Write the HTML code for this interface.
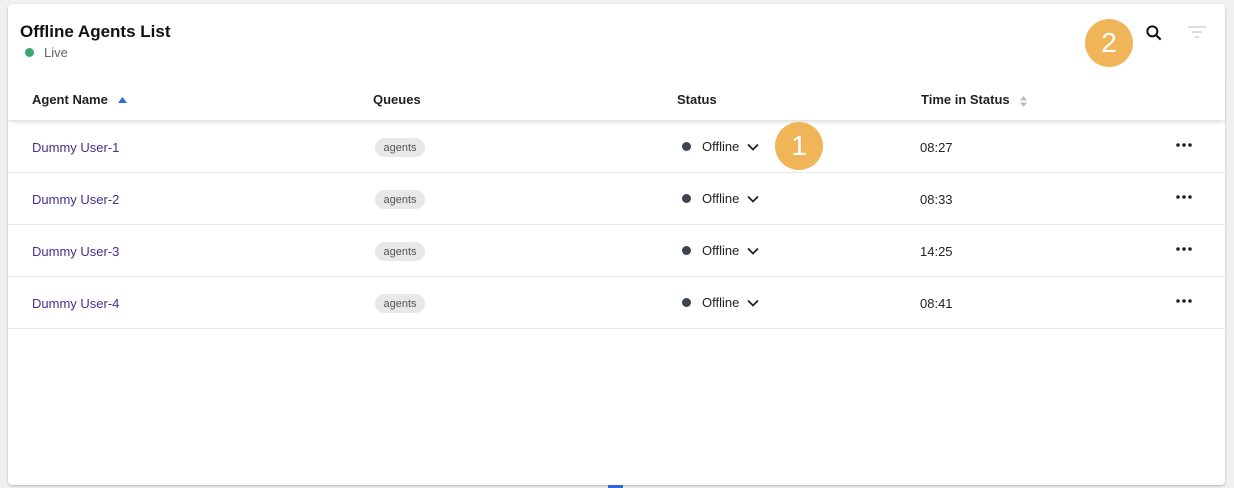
<!DOCTYPE html>
<html><head><meta charset="utf-8"><style>
*{margin:0;padding:0;box-sizing:border-box}
body{width:1234px;height:488px;background:#eef0f2;font-family:"Liberation Sans",sans-serif;position:relative;overflow:hidden}
.card{position:absolute;left:8px;top:4px;width:1217px;height:481px;background:#fff;border-radius:4px;box-shadow:0 1px 2px rgba(0,0,0,.25)}
.title{position:absolute;left:12px;top:18px;font-size:17px;font-weight:bold;color:#111}
.live{position:absolute;left:17px;top:41px;font-size:13px;color:#666}
.live i{display:inline-block;width:9px;height:9px;border-radius:50%;background:#3aa76d;margin-right:10px;vertical-align:0}
.hdr{position:absolute;left:0;top:78px;width:1217px;height:39px;box-shadow:0 3px 4px -2px rgba(0,0,0,.15);border-bottom:1px solid #e6e6e6}
.h{position:absolute;top:10px;font-size:13px;font-weight:bold;color:#222}
.row{position:absolute;left:0;width:1217px;height:52px;border-bottom:1px solid #e8e8e8}
.name{position:absolute;left:24px;top:19px;font-size:13px;color:#4b2d8f}
.chip{position:absolute;left:367px;top:17px;height:19px;width:50px;border-radius:10px;background:#e8e8e8;font-size:11px;color:#555;display:flex;align-items:center;justify-content:center}
.st{position:absolute;left:674px;top:18px;font-size:13px;color:#222;display:flex;align-items:center}
.st i{display:inline-block;width:9px;height:9px;border-radius:50%;background:#3d4350;margin-right:11px}
.t{position:absolute;left:912px;top:19px;font-size:13px;color:#222}
.dots{position:absolute;left:1168px;top:22px}
.badge{position:absolute;width:48px;height:48px;border-radius:50%;background:#f0b459;color:#fff;font-size:28px;text-align:center;line-height:48px;font-weight:300}
</style></head><body>
<div class="card">
<div class="title">Offline Agents List</div>
<div class="live"><i></i>Live</div>
<svg style="position:absolute;left:1136px;top:19px" width="20" height="20" viewBox="0 0 24 24"><circle cx="10" cy="10" r="6" fill="none" stroke="#111" stroke-width="2.4"/><path d="M14.5 14.5L20 20" stroke="#111" stroke-width="2.6"/></svg>
<svg style="position:absolute;left:1179px;top:21px" width="20" height="16" viewBox="0 0 20 16"><path d="M1 2h18M5 7h10M8 12h4" stroke="#d4d4d4" stroke-width="1.6"/></svg>
<div class="hdr">
<div class="h" style="left:24px">Agent Name</div>
<svg style="position:absolute;left:110px;top:15px" width="9" height="6" viewBox="0 0 9 6"><path d="M0 6L4.5 0L9 6Z" fill="#2d6ce0"/></svg>
<div class="h" style="left:365px">Queues</div>
<div class="h" style="left:669px">Status</div>
<div class="h" style="left:913px">Time in Status</div>
<svg style="position:absolute;left:1012px;top:14px" width="7" height="11" viewBox="0 0 7 11"><path d="M0 4.5L3.5 0L7 4.5ZM0 6.5L3.5 11L7 6.5Z" fill="#bbb"/></svg>
</div>
<div class="row" style="top:117px"><div class="name">Dummy User-1</div><div class="chip">agents</div><div class="st"><i></i>Offline<svg style="margin-left:8px" width="12" height="8" viewBox="0 0 12 8"><path d="M1 1.5L6 6.5L11 1.5" fill="none" stroke="#222" stroke-width="1.8"/></svg></div><div class="t">08:27</div><svg class="dots" width="16" height="4"><circle cx="2" cy="2" r="1.8" fill="#222"/><circle cx="8" cy="2" r="1.8" fill="#222"/><circle cx="14" cy="2" r="1.8" fill="#222"/></svg></div>
<div class="row" style="top:169px"><div class="name">Dummy User-2</div><div class="chip">agents</div><div class="st"><i></i>Offline<svg style="margin-left:8px" width="12" height="8" viewBox="0 0 12 8"><path d="M1 1.5L6 6.5L11 1.5" fill="none" stroke="#222" stroke-width="1.8"/></svg></div><div class="t">08:33</div><svg class="dots" width="16" height="4"><circle cx="2" cy="2" r="1.8" fill="#222"/><circle cx="8" cy="2" r="1.8" fill="#222"/><circle cx="14" cy="2" r="1.8" fill="#222"/></svg></div>
<div class="row" style="top:221px"><div class="name">Dummy User-3</div><div class="chip">agents</div><div class="st"><i></i>Offline<svg style="margin-left:8px" width="12" height="8" viewBox="0 0 12 8"><path d="M1 1.5L6 6.5L11 1.5" fill="none" stroke="#222" stroke-width="1.8"/></svg></div><div class="t">14:25</div><svg class="dots" width="16" height="4"><circle cx="2" cy="2" r="1.8" fill="#222"/><circle cx="8" cy="2" r="1.8" fill="#222"/><circle cx="14" cy="2" r="1.8" fill="#222"/></svg></div>
<div class="row" style="top:273px"><div class="name">Dummy User-4</div><div class="chip">agents</div><div class="st"><i></i>Offline<svg style="margin-left:8px" width="12" height="8" viewBox="0 0 12 8"><path d="M1 1.5L6 6.5L11 1.5" fill="none" stroke="#222" stroke-width="1.8"/></svg></div><div class="t">08:41</div><svg class="dots" width="16" height="4"><circle cx="2" cy="2" r="1.8" fill="#222"/><circle cx="8" cy="2" r="1.8" fill="#222"/><circle cx="14" cy="2" r="1.8" fill="#222"/></svg></div>
</div>
<div class="badge" style="left:1085px;top:19px">2</div>
<div class="badge" style="left:775px;top:122px">1</div>
<div style="position:absolute;left:608px;top:485px;width:15px;height:3px;background:#2d6ce0"></div>
</body></html>
